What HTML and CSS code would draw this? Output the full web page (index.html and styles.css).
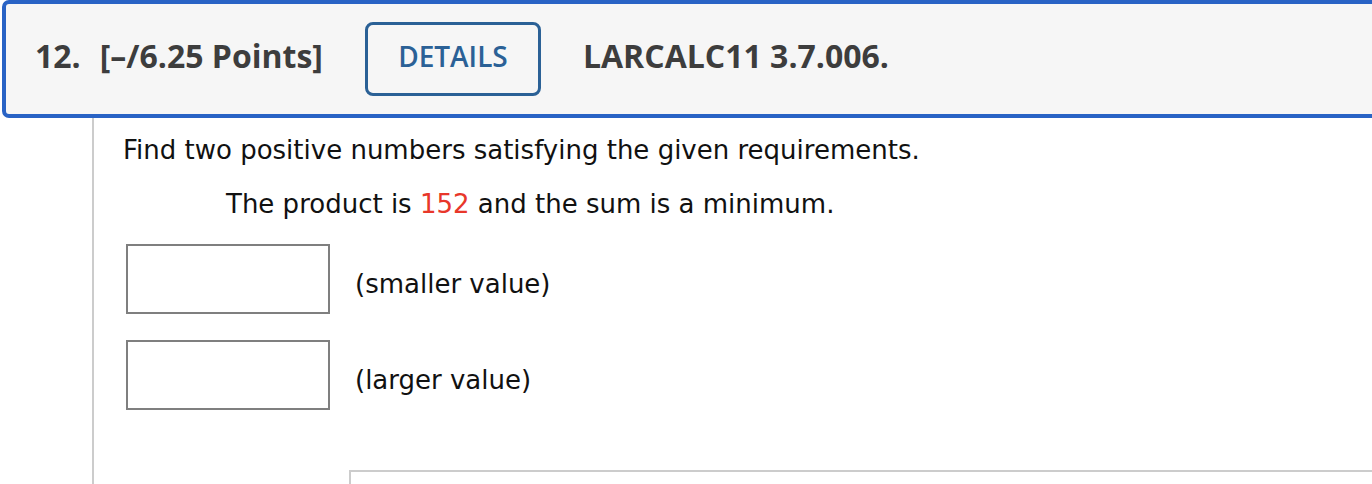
FILE: index.html
```html
<!DOCTYPE html>
<html lang="en">
  <head>
    <meta charset="UTF-8" />
    <meta name="viewport" content="width=device-width, initial-scale=1.0" />
    <title>LARCALC11 3.7.006</title>
    <link rel="stylesheet" href="styles.css">
  </head>
  <body>
    <div class="question-header">
      <span class="q-number">12.</span>
      <span class="q-points">[&ndash;/6.25 Points]</span>
      <div class="details-btn">DETAILS</div>
      <span class="q-ref">LARCALC11 3.7.006.</span>
    </div>
    <div class="question-body">
      <p class="prompt">Find two positive numbers satisfying the given requirements.</p>
      <p class="condition">The product is <span class="given">152</span> and the sum is a minimum.</p>
      <div class="answer-row">
        <input type="text" class="answer-box" />
        <span class="answer-label">(smaller value)</span>
      </div>
      <div class="answer-row">
        <input type="text" class="answer-box" />
        <span class="answer-label">(larger value)</span>
      </div>
      <div class="next-panel"></div>
    </div>
  </body>
</html>
```

FILE: styles.css
```css
* {
  --header-blue: #2963c5;
  --details-blue: #2b6196;
  --header-bg: #f6f6f6;
  --header-text: #3d3d3d;
  --rule-gray: #cccccc;
}
html,
body {
  margin: 0;
  height: 100%;
  overflow: hidden;
  background-color: white;
}
.question-header {
  display: flex;
  align-items: center;
  box-sizing: border-box;
  height: 118px;
  margin-left: 2px;
  width: calc(100% + 20px);
  padding-left: 29px;
  background-color: var(--header-bg);
  border: 4px solid var(--header-blue);
  border-radius: 7px;
  font-family: "Open Sans", sans-serif;
  font-weight: 700;
  font-size: 32px;
  color: var(--header-text);
}
.q-number,
.q-points,
.q-ref {
  margin-bottom: 7px;
}
.q-number {
  margin-right: 19px;
}
.q-points {
  margin-right: 42px;
}
.details-btn {
  box-sizing: border-box;
  width: 176px;
  height: 74px;
  padding-bottom: 6px;
  border: 3px solid var(--details-blue);
  border-radius: 8px;
  color: var(--details-blue);
  font-weight: 600;
  font-size: 28px;
  display: flex;
  align-items: center;
  justify-content: center;
  margin-right: 42px;
}
.question-body {
  box-sizing: border-box;
  height: calc(100% - 118px);
  overflow: hidden;
  margin-left: 92px;
  border-left: 2px solid var(--rule-gray);
  padding: 16px 0 0 29px;
  font-family: "DejaVu Sans", Verdana, sans-serif;
  font-size: 26px;
  line-height: 32px;
  color: #111;
}
.prompt {
  margin: 0 0 22px 0;
}
.condition {
  margin: 0 0 24px 103px;
}
.given {
  color: #e8372a;
}
.answer-row {
  display: flex;
  align-items: center;
  margin-bottom: 26px;
}
.answer-box {
  box-sizing: border-box;
  width: 204px;
  height: 70px;
  margin: 0 25px 0 3px;
  border: 2px solid #7f7f7f;
  background: white;
}
.answer-label {
  padding-top: 10px;
}
.next-panel {
  margin-left: 226px;
  margin-top: 60px;
  height: 40px;
  border-top: 2px solid var(--rule-gray);
  border-left: 2px solid var(--rule-gray);
}
```
